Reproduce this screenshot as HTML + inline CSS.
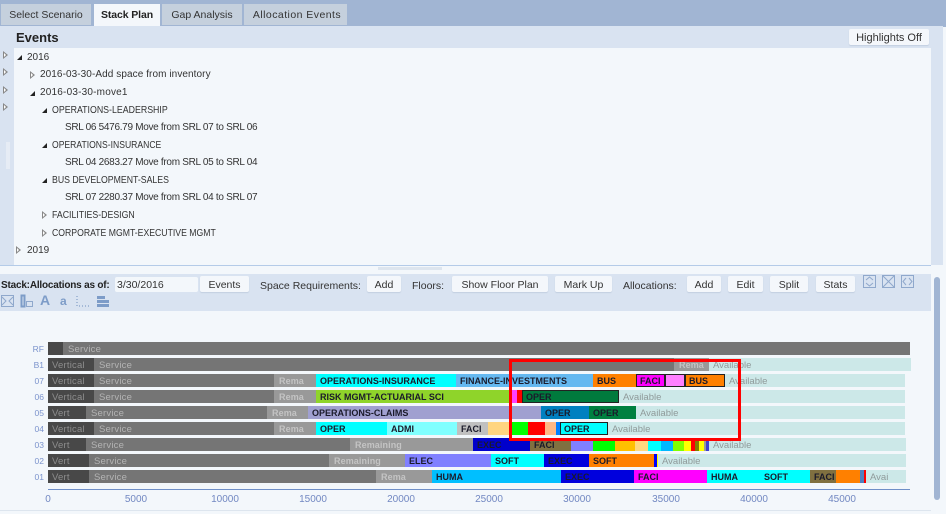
<!DOCTYPE html>
<html><head><meta charset="utf-8"><style>
html,body{margin:0;padding:0}
body{width:946px;height:514px;overflow:hidden;background:#f3f7fb;position:relative;font-family:"Liberation Sans",sans-serif;color:#2a2a3a;filter:blur(.3px)}
div,i,b,span,u{position:absolute;white-space:nowrap;display:block}
i,u{font-style:normal;text-decoration:none}
.tab{top:4px;height:21px;background:#c5d0dd;font-size:10.5px;line-height:22px;text-align:center;color:#333}
.t{font-size:10px;height:14px;line-height:14px;color:#333;margin-top:1px}
.s{letter-spacing:-.3px}
.k{transform-origin:left center}
.o,.c{width:0;height:0}
.o{border-style:solid;border-width:0 0 5px 5px;border-color:transparent transparent #222 transparent}
.c{border-style:solid;border-width:4px 0 4px 5px;border-color:transparent transparent transparent #888}
.c:after{content:"";position:absolute;left:-4px;top:-2px;border-style:solid;border-width:2px 0 2px 2.5px;border-color:transparent transparent transparent #fff}
.btn{top:276px;height:16px;background:#f4f7fb;border-radius:2px;box-shadow:0 1px 1px #c2cfe0;font-size:10.5px;line-height:18px;text-align:center;color:#333}
.l{top:279px;font-size:10.5px;line-height:14px;color:#333}
.r{left:0;height:13px;width:946px}
.r i{top:0;height:13px;font-size:9px;line-height:15px;padding-left:4px;box-sizing:border-box;overflow:hidden;font-weight:bold;color:#1a1a2a}
.r i.d{background:#484848;color:#8e8e8e;font-weight:normal;font-size:9.5px;letter-spacing:.2px}
.r i.g{background:#757575;color:#b4b4b4;font-weight:normal;font-size:9.5px;padding-left:5px;letter-spacing:.2px}
.r i.m{background:#999;color:#c4c4c4;padding-left:5px;letter-spacing:.1px}
.r i.a{background:#cce8e8;color:#8f9a9a;font-weight:normal;font-size:9.5px;padding-left:4px}
.r i.x{box-shadow:inset 0 0 0 1px #222}
.fl{left:30px;width:14px;text-align:right;font-size:8.5px;line-height:14px;color:#7b93cc}
.ax{top:493px;font-size:10px;color:#7288c2;line-height:13px;width:50px;text-align:center}
</style></head><body>
<div style="left:0;top:0;width:946px;height:27px;background:#a1b5d3"></div>
<div class="tab" style="left:1px;width:90px">Select Scenario</div>
<div class="tab" style="left:94px;width:66px;height:22px;background:#f4f7fb;font-weight:bold;color:#222;letter-spacing:-.1px">Stack Plan</div>
<div class="tab" style="left:162px;width:80px">Gap Analysis</div>
<div class="tab" style="left:244px;width:103px;letter-spacing:.45px;text-indent:3px">Allocation Events</div>
<div style="left:0;top:26px;width:943px;height:239px;background:#d9e3f1"></div>
<div style="left:14px;top:48px;width:917px;height:217px;background:#f3f7fb"></div>
<div style="left:16px;top:29px;font-size:13px;font-weight:bold;line-height:17px;color:#222">Events</div>
<div style="left:849px;top:29px;width:80px;height:16px;background:#f4f7fb;border-radius:2px;box-shadow:0 1px 1px #c2cfe0;font-size:11px;line-height:18px;text-align:center;color:#333">Highlights Off</div>
<div class="c" style="left:3px;top:51px"></div><div class="c" style="left:3px;top:68px"></div><div class="c" style="left:3px;top:86px"></div><div class="c" style="left:3px;top:103px"></div>
<div style="left:6px;top:142px;width:4px;height:27px;background:#e6ecf5"></div>
<div style="left:935px;top:142px;width:5px;height:27px;background:#e6ecf5"></div>
<div class="o" style="left:17px;top:55px"></div><div class="t" style="left:27px;top:50px">2016</div>
<div class="c" style="left:30px;top:71px"></div><div class="t" style="left:40px;top:67px;letter-spacing:.08px">2016-03-30-Add space from inventory</div>
<div class="o" style="left:30px;top:91px"></div><div class="t" style="left:40px;top:85px;letter-spacing:.2px">2016-03-30-move1</div>
<div class="o" style="left:42px;top:108px"></div><div class="t k" style="left:52px;top:103px;transform:scaleX(.88)">OPERATIONS-LEADERSHIP</div>
<div class="t s" style="left:65px;top:120px">SRL 06 5476.79 Move from SRL 07 to SRL 06</div>
<div class="o" style="left:42px;top:143px"></div><div class="t k" style="left:52px;top:138px;transform:scaleX(.86)">OPERATIONS-INSURANCE</div>
<div class="t s" style="left:65px;top:155px">SRL 04 2683.27 Move from SRL 05 to SRL 04</div>
<div class="o" style="left:42px;top:178px"></div><div class="t k" style="left:52px;top:173px;transform:scaleX(.873)">BUS DEVELOPMENT-SALES</div>
<div class="t s" style="left:65px;top:190px">SRL 07 2280.37 Move from SRL 04 to SRL 07</div>
<div class="c" style="left:42px;top:211px"></div><div class="t k" style="left:52px;top:208px;transform:scaleX(.876)">FACILITIES-DESIGN</div>
<div class="c" style="left:42px;top:229px"></div><div class="t k" style="left:52px;top:226px;transform:scaleX(.868)">CORPORATE MGMT-EXECUTIVE MGMT</div>
<div class="c" style="left:16px;top:246px"></div><div class="t" style="left:27px;top:243px">2019</div>

<div style="left:0;top:265px;width:931px;height:1px;background:#b4cbe8"></div>
<div style="left:378px;top:267px;width:64px;height:3px;background:#dde5ee"></div>
<div style="left:0;top:274px;width:931px;height:37px;background:#d9e3f1"></div>
<div style="left:931px;top:266px;width:15px;height:248px;background:#f3f7fb"></div>
<div style="left:934px;top:277px;width:6px;height:223px;background:#a1b5d3;border-radius:3px"></div>
<div style="left:931px;top:48px;width:12px;height:217px;background:#d9e3f1"></div>

<div style="left:1px;top:279px;font-size:10px;font-weight:bold;line-height:14px;color:#222;letter-spacing:-.2px">Stack:Allocations as of:</div>
<div style="left:115px;top:277px;width:83px;height:15px;background:#f3f7fb;border-radius:2px;font-size:10.5px;line-height:16px;padding-left:2px;box-sizing:border-box;color:#333">3/30/2016</div>
<div class="btn" style="left:200px;width:49px">Events</div>
<div class="l" style="left:260px">Space Requirements:</div>
<div class="btn" style="left:367px;width:34px">Add</div>
<div class="l" style="left:412px">Floors:</div>
<div class="btn" style="left:452px;width:96px">Show Floor Plan</div>
<div class="btn" style="left:555px;width:57px">Mark Up</div>
<div class="l" style="left:623px">Allocations:</div>
<div class="btn" style="left:687px;width:34px">Add</div>
<div class="btn" style="left:728px;width:35px">Edit</div>
<div class="btn" style="left:770px;width:38px">Split</div>
<div class="btn" style="left:816px;width:39px">Stats</div>
<svg style="position:absolute;left:863px;top:275px" width="54" height="14" fill="none" stroke="#8fa8cc" stroke-width="1">
<rect x=".5" y=".5" width="12" height="12"/><path d="M3 5l3.500-3 3.500 3M3 8l3.500 3 3.500-3"/>
<rect x="19.500" y=".5" width="12" height="12"/><path d="M20 1l5.500 5.500 5.500-5.500M20 12l5.500-5.500 5.500 5.500"/>
<rect x="38.500" y=".5" width="12" height="12"/><path d="M43 3l-3 3.500 3 3.500M46 3l3 3.500-3 3.500"/>
</svg>
<svg style="position:absolute;left:1px;top:293px" width="112" height="15" fill="none" stroke="#8fa8cc" stroke-width="1">
<rect x=".5" y="2.500" width="12" height="11"/><path d="M1 4l4 4-4 4M12 4l-4 4 4 4"/>
<rect x="20.500" y="2.500" width="3" height="11" stroke-width="2" stroke="#7d9cc8"/><rect x="25.500" y="8.500" width="6" height="5"/>
<path d="M76 3v11" stroke-dasharray="1 2" stroke="#6f8fbd"/><path d="M78 13h10" stroke-dasharray="1 2" stroke="#6f8fbd"/>
<path d="M96 3h8v3h-8zM96 7h12v3h-12zM96 11h12v3h-12z" fill="#7d9cc8" stroke="none"/>
</svg>
<div style="left:40px;top:292px;font-size:14px;font-weight:bold;color:#7d9cc8;line-height:16px">A</div>
<div style="left:60px;top:294px;font-size:12px;font-weight:bold;color:#7d9cc8;line-height:15px">a</div>

<div style="left:0;top:510px;width:931px;height:1px;background:#dde5ee"></div>

<div class="fl" style="top:342px">RF</div><div class="fl" style="top:358px">B1</div><div class="fl" style="top:374px">07</div><div class="fl" style="top:390px">06</div><div class="fl" style="top:406px">05</div><div class="fl" style="top:422px">04</div><div class="fl" style="top:438px">03</div><div class="fl" style="top:454px">02</div><div class="fl" style="top:470px">01</div>

<div class="r" style="top:342px"><i class="d" style="left:48px;width:15px"></i><i class="g" style="left:63px;width:847px">Service</i></div>
<div class="r" style="top:358px"><i class="d" style="left:48px;width:46px">Vertical</i><i class="g" style="left:94px;width:580px">Service</i><i class="m" style="left:674px;width:35px">Rema</i><i class="a" style="left:709px;width:202px">Available</i></div>
<div class="r" style="top:374px"><i class="d" style="left:48px;width:46px">Vertical</i><i class="g" style="left:94px;width:180px">Service</i><i class="m" style="left:274px;width:42px">Rema</i><i style="left:316px;width:140px;background:#0ff">OPERATIONS-INSURANCE</i><i style="left:456px;width:137px;background:#64b8f0">FINANCE-INVESTMENTS</i><i style="left:593px;width:43px;background:#ff8000">BUS</i><i class="x" style="left:636px;width:29px;background:#f0f">FACI</i><i class="x" style="left:665px;width:20px;background:#ff80ff"></i><i class="x" style="left:685px;width:40px;background:#ff8000">BUS</i><i class="a" style="left:725px;width:180px">Available</i></div>
<div class="r" style="top:390px"><i class="d" style="left:48px;width:46px">Vertical</i><i class="g" style="left:94px;width:180px">Service</i><i class="m" style="left:274px;width:42px">Rema</i><i style="left:316px;width:196px;background:#8fd42a">RISK MGMT-ACTUARIAL SCI</i><i style="left:512px;width:5px;background:#ff40ff"></i><i style="left:517px;width:5px;background:#f00"></i><i class="x" style="left:522px;width:97px;background:#007a3d">OPER</i><i class="a" style="left:619px;width:286px">Available</i></div>
<div class="r" style="top:406px"><i class="d" style="left:48px;width:38px">Vert</i><i class="g" style="left:86px;width:181px">Service</i><i class="m" style="left:267px;width:41px">Rema</i><i style="left:308px;width:233px;background:#a0a0d0">OPERATIONS-CLAIMS</i><i style="left:541px;width:48px;background:#0080c0">OPER</i><i style="left:589px;width:47px;background:#008040">OPER</i><i class="a" style="left:636px;width:269px">Available</i></div>
<div class="r" style="top:422px"><i class="d" style="left:48px;width:46px">Vertical</i><i class="g" style="left:94px;width:180px">Service</i><i class="m" style="left:274px;width:42px">Rema</i><i style="left:316px;width:71px;background:#0ff">OPER</i><i style="left:387px;width:70px;background:#80ffff">ADMI</i><i style="left:457px;width:31px;background:#c0c0c0">FACI</i><i style="left:488px;width:23px;background:#ffd580"></i><i style="left:511px;width:17px;background:#0f0"></i><i style="left:528px;width:17px;background:#f00"></i><i style="left:545px;width:11px;background:#ffb885"></i><i style="left:556px;width:4px;background:#0080ff"></i><i class="x" style="left:560px;width:48px;background:#0ff">OPER</i><i class="a" style="left:608px;width:297px">Available</i></div>
<div class="r" style="top:438px"><i class="d" style="left:48px;width:38px">Vert</i><i class="g" style="left:86px;width:264px">Service</i><i class="m" style="left:350px;width:123px">Remaining</i><i style="left:473px;width:57px;background:#00c">EXEC</i><i style="left:530px;width:41px;background:#807040">FACI</i><i style="left:571px;width:22px;background:#8080ff"></i><i style="left:593px;width:22px;background:#0f0"></i><i style="left:615px;width:20px;background:#ffc000"></i><i style="left:635px;width:13px;background:#ffd880"></i><i style="left:648px;width:13px;background:#0ff"></i><i style="left:661px;width:12px;background:#00b8ff"></i><i style="left:673px;width:11px;background:#80ff00"></i><i style="left:684px;width:7px;background:#ff0"></i><i style="left:691px;width:4px;background:#f00"></i><i style="left:695px;width:4px;background:#808000"></i><i style="left:699px;width:5px;background:#ff0"></i><i style="left:704px;width:2px;background:#999"></i><i style="left:706px;width:3px;background:#4040d0"></i><i class="a" style="left:709px;width:197px">Available</i></div>
<div class="r" style="top:454px"><i class="d" style="left:48px;width:41px">Vert</i><i class="g" style="left:89px;width:240px">Service</i><i class="m" style="left:329px;width:76px">Remaining</i><i style="left:405px;width:86px;background:#8080ff">ELEC</i><i style="left:491px;width:53px;background:#0ff">SOFT</i><i style="left:544px;width:45px;background:#00d">EXEC</i><i style="left:589px;width:65px;background:#ff8000">SOFT</i><i style="left:654px;width:3px;background:#00f"></i><i style="left:657px;width:1px;background:#ff0"></i><i class="a" style="left:658px;width:248px">Available</i></div>
<div class="r" style="top:470px"><i class="d" style="left:48px;width:41px">Vert</i><i class="g" style="left:89px;width:287px">Service</i><i class="m" style="left:376px;width:56px">Rema</i><i style="left:432px;width:129px;background:#00bfff">HUMA</i><i style="left:561px;width:73px;background:#00d">EXEC</i><i style="left:634px;width:73px;background:#f0f">FACI</i><i style="left:707px;width:53px;background:#0ff">HUMA</i><i style="left:760px;width:50px;background:#0ff">SOFT</i><i style="left:810px;width:26px;background:#807040">FACI</i><i style="left:836px;width:24px;background:#ff8000"></i><i style="left:860px;width:4px;background:#5080c0"></i><i style="left:864px;width:2px;background:#f00"></i><i class="a" style="left:866px;width:40px">Avai</i></div>

<div style="left:48px;top:489px;width:862px;height:1px;background:#6f8fc8"></div>
<div class="ax" style="left:23px">0</div><div class="ax" style="left:111px">5000</div><div class="ax" style="left:200px">10000</div><div class="ax" style="left:288px">15000</div><div class="ax" style="left:376px">20000</div><div class="ax" style="left:464px">25000</div><div class="ax" style="left:552px">30000</div><div class="ax" style="left:641px">35000</div><div class="ax" style="left:729px">40000</div><div class="ax" style="left:817px">45000</div>

<div style="left:509px;top:359px;width:232px;height:82px;box-sizing:border-box;border:3px solid #f00"></div>
</body></html>
